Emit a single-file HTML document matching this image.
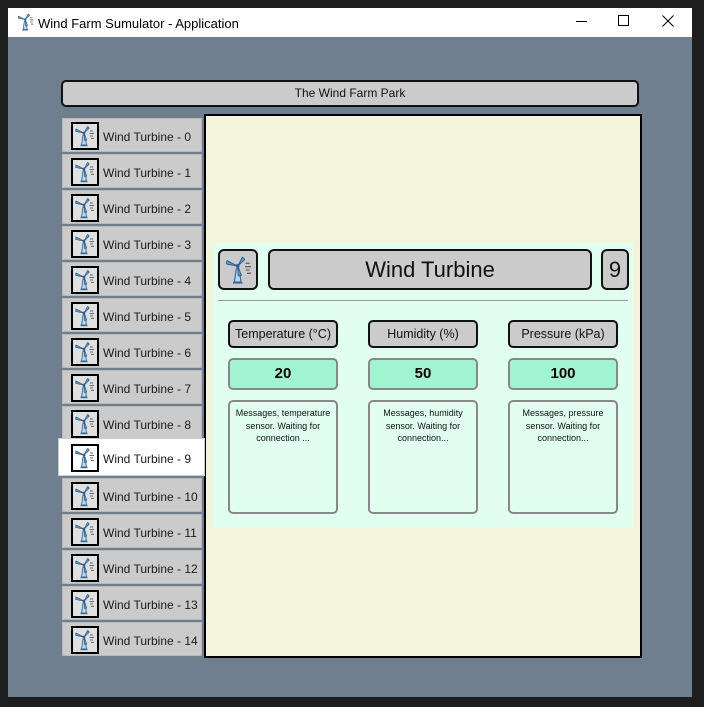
<!DOCTYPE html>
<html><head><meta charset="utf-8"><style>
*{box-sizing:border-box;margin:0;padding:0}
body{width:704px;height:707px;background:#1e1e1e;position:relative;overflow:hidden;font-family:"Liberation Sans",sans-serif}
.a{position:absolute}
.title{left:8px;top:8px;width:684px;height:29px;background:#fff;font-size:13px;color:#000}
.content{left:8px;top:37px;width:684px;height:660px;background:#6f7f8f}
.item{left:62px;width:140px;height:34px;background:#cbcbcb;border:1px solid #b8b8b8;font-size:12px;color:#1a1a1a;white-space:nowrap}
.item .ic{position:absolute;left:8px;top:3px;width:28px;height:28px;border:2px solid #000;background:#e0e0e0}
.item .ic svg{position:absolute;left:0;top:0}
.item span{position:absolute;left:40px;top:11px}
.sel{left:58px;width:147px;height:38px;background:#fff;border:1px solid #ccc}
.sel .ic{top:5px;left:12px;background:#fff}
.sel span{left:44px;top:13px}
.box{border-radius:5px;text-align:center;white-space:nowrap}
.lab{border:2px solid #111;background:#cbcbcb;font-size:12.5px;line-height:25px;color:#111}
.val{border:2px solid #888;background:#a0f5d0;font-size:15px;font-weight:bold;line-height:27px}
.msg{border:2px solid #888;background:#e0fff0;font-size:9px;line-height:12.5px;padding:5px 5px;color:#111;white-space:normal}
</style></head><body>
<svg width="0" height="0" style="position:absolute"><defs><symbol id="t" viewBox="0 0 24 24">
<path d="M10 11 L8.5 21 H13.5 L12 11 Z" fill="#b8d8f0" stroke="#3a6a9a" stroke-width="0.9"/>
<path d="M7.5 21.5 H14.5" stroke="#3a6a9a" stroke-width="1.4"/>
<path d="M11 9 L3 5 Q2.2 6.6 3 7.6 Z" fill="#5b9bd5" stroke="#2d5f8f" stroke-width="0.7"/>
<path d="M11 9 L14.5 2.5 Q16 3 16.2 4.4 Z" fill="#5b9bd5" stroke="#2d5f8f" stroke-width="0.7"/>
<path d="M11 9 L13.8 16 Q12.5 16.8 11.4 16.2 Z" fill="#5b9bd5" stroke="#2d5f8f" stroke-width="0.7"/>
<circle cx="11" cy="9" r="1.4" fill="#2d5f8f"/>
<path d="M17 7 h3 M16.5 9.5 h4.5 M17 12 h3 M18 14.5 h3" stroke="#666" stroke-width="1"/>
</symbol></defs></svg>
<div class="a title"><svg class="a" style="left:8px;top:4px" width="20" height="20"><use href="#t"/></svg><span class="a" style="left:30px;top:8px">Wind Farm Sumulator - Application</span>
<span class="a" style="left:568px;top:13px;width:11px;height:1px;background:#000"></span>
<span class="a" style="left:610px;top:7px;width:11px;height:11px;border:1px solid #000"></span>
<svg class="a" style="left:654px;top:7px" width="12" height="12"><path d="M0.5 0.5 L11.5 11.5 M11.5 0.5 L0.5 11.5" stroke="#000" stroke-width="1"/></svg>
</div>
<div class="a content"></div>
<div class="a box" style="left:61px;top:80px;width:578px;height:27px;background:#cbcbcb;border:2px solid #111;border-radius:5px;font-size:12px;line-height:23px;color:#111">The Wind Farm Park</div>
<div class="a" style="left:204px;top:114px;width:438px;height:544px;background:#f4f4dc;border:2px solid #000"></div>
<div class="a item" style="top:118px"><div class="ic"><svg width="24" height="24"><use href="#t"/></svg></div><span>Wind Turbine - 0</span></div>
<div class="a item" style="top:154px"><div class="ic"><svg width="24" height="24"><use href="#t"/></svg></div><span>Wind Turbine - 1</span></div>
<div class="a item" style="top:190px"><div class="ic"><svg width="24" height="24"><use href="#t"/></svg></div><span>Wind Turbine - 2</span></div>
<div class="a item" style="top:226px"><div class="ic"><svg width="24" height="24"><use href="#t"/></svg></div><span>Wind Turbine - 3</span></div>
<div class="a item" style="top:262px"><div class="ic"><svg width="24" height="24"><use href="#t"/></svg></div><span>Wind Turbine - 4</span></div>
<div class="a item" style="top:298px"><div class="ic"><svg width="24" height="24"><use href="#t"/></svg></div><span>Wind Turbine - 5</span></div>
<div class="a item" style="top:334px"><div class="ic"><svg width="24" height="24"><use href="#t"/></svg></div><span>Wind Turbine - 6</span></div>
<div class="a item" style="top:370px"><div class="ic"><svg width="24" height="24"><use href="#t"/></svg></div><span>Wind Turbine - 7</span></div>
<div class="a item" style="top:406px"><div class="ic"><svg width="24" height="24"><use href="#t"/></svg></div><span>Wind Turbine - 8</span></div>
<div class="a item sel" style="top:438px"><div class="ic"><svg width="24" height="24"><use href="#t"/></svg></div><span>Wind Turbine - 9</span></div>
<div class="a item" style="top:478px"><div class="ic"><svg width="24" height="24"><use href="#t"/></svg></div><span>Wind Turbine - 10</span></div>
<div class="a item" style="top:514px"><div class="ic"><svg width="24" height="24"><use href="#t"/></svg></div><span>Wind Turbine - 11</span></div>
<div class="a item" style="top:550px"><div class="ic"><svg width="24" height="24"><use href="#t"/></svg></div><span>Wind Turbine - 12</span></div>
<div class="a item" style="top:586px"><div class="ic"><svg width="24" height="24"><use href="#t"/></svg></div><span>Wind Turbine - 13</span></div>
<div class="a item" style="top:622px"><div class="ic"><svg width="24" height="24"><use href="#t"/></svg></div><span>Wind Turbine - 14</span></div>
<div class="a" style="left:213px;top:243px;width:420px;height:285px;background:#e0fff0"></div>
<div class="a box" style="left:218px;top:249px;width:40px;height:41px;border:2px solid #111;background:#cbcbcb;border-radius:6px"><svg class="a" style="left:3px;top:3px" width="32" height="32" viewBox="0 0 24 24"><use href="#t"/></svg></div>
<div class="a box" style="left:268px;top:249px;width:324px;height:41px;border:2px solid #111;background:#cbcbcb;border-radius:6px;font-size:22px;line-height:37px;color:#111">Wind Turbine</div>
<div class="a box" style="left:601px;top:249px;width:28px;height:41px;border:2px solid #111;background:#cbcbcb;border-radius:6px;font-size:22px;line-height:37px;color:#111">9</div>
<div class="a" style="left:218px;top:300px;width:410px;height:1px;background:#999"></div>
<div class="a box lab" style="left:228px;top:320px;width:110px;height:28px">Temperature (°C)</div>
<div class="a box lab" style="left:368px;top:320px;width:110px;height:28px">Humidity (%)</div>
<div class="a box lab" style="left:508px;top:320px;width:110px;height:28px">Pressure (kPa)</div>
<div class="a box val" style="left:228px;top:358px;width:110px;height:32px">20</div>
<div class="a box val" style="left:368px;top:358px;width:110px;height:32px">50</div>
<div class="a box val" style="left:508px;top:358px;width:110px;height:32px">100</div>
<div class="a box msg" style="left:228px;top:400px;width:110px;height:114px">Messages, temperature sensor. Waiting for connection ...</div>
<div class="a box msg" style="left:368px;top:400px;width:110px;height:114px">Messages, humidity sensor. Waiting for connection...</div>
<div class="a box msg" style="left:508px;top:400px;width:110px;height:114px">Messages, pressure sensor. Waiting for connection...</div>
</body></html>
